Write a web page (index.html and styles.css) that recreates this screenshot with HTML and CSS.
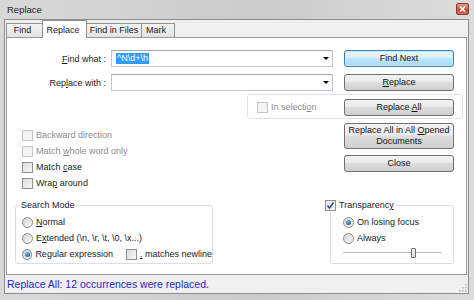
FILE: index.html
```html
<!DOCTYPE html>
<html lang="en">
<head>
    <meta charset="UTF-8">
    <title>Replace</title>
    <link rel="stylesheet" href="styles.css">
</head>
<body>

<div class="window">
    <!-- title bar -->
    <div class="titlebar">
        <span class="title">Replace</span>
        <span class="close">
            <svg width="7" height="6" viewBox="0 0 7 6"><path d="M1 0.5 L6 5.5 M6 0.5 L1 5.5" stroke="#fff" stroke-width="1.6"/></svg>
        </span>
    </div>

    <div class="client">
        <div class="tabs">
            <div class="tab t-find">Find</div>
            <div class="tab t-replace sel">Replace</div>
            <div class="tab t-files">Find in Files</div>
            <div class="tab t-mark">Mark</div>
        </div>

        <div class="panel">
            <!-- search / replace fields -->
            <div class="top">
                <div class="fields">
                    <div class="field">
                        <label><u>F</u>ind what :</label>
                        <div class="combo"><span class="hl">^N\d+\h</span><span class="arrow"></span></div>
                    </div>
                    <div class="field">
                        <label>Rep<u>l</u>ace with :</label>
                        <div class="combo"><span class="arrow"></span></div>
                    </div>
                </div>
                <div class="btncol">
                    <div class="btn default">Find Next</div>
                    <div class="btn"><u>R</u>eplace</div>
                </div>
            </div>

            <div class="insel">
                <span class="chk dis"><i class="box"></i><span>In selecti<u>o</u>n</span></span>
                <div class="btn">Replace <u>A</u>ll</div>
            </div>

            <div class="mid">
                <div class="opts">
                    <div class="chk dis"><i class="box"></i><span>Backward direction</span></div>
                    <div class="chk dis"><i class="box"></i><span>Match <u>w</u>hole word only</span></div>
                    <div class="chk"><i class="box"></i><span>Match <u>c</u>ase</span></div>
                    <div class="chk"><i class="box"></i><span>Wra<u>p</u> around</span></div>
                </div>
                <div class="btncol">
                    <div class="btn tall">Replace All in All <u>O</u>pened<br>Documents</div>
                    <div class="btn">Close</div>
                </div>
            </div>

            <div class="bottom">
                <fieldset class="group mode">
                    <legend>Search Mode</legend>
                    <div class="radio"><i class="dot"></i><span><u>N</u>ormal</span></div>
                    <div class="radio"><i class="dot"></i><span>E<u>x</u>tended (\n, \r, \t, \0, \x...)</span></div>
                    <div class="radio"><i class="dot on"></i><span>Re<u>g</u>ular expression</span>
                        <span class="chk newline"><i class="box"></i><span><u>.</u> matches newline</span></span>
                    </div>
                </fieldset>
                <fieldset class="group transp">
                    <legend>
                        <span class="chk"><i class="box checked"><svg width="9" height="9" viewBox="0 0 9 9"><path d="M1.5 4.5 L3.5 7 L7.5 1.5" fill="none" stroke="#2b4a8a" stroke-width="1.5"/></svg></i><span>Transparenc<u>y</u></span></span>
                    </legend>
                    <div class="radio"><i class="dot on"></i><span>On losing focus</span></div>
                    <div class="radio"><i class="dot"></i><span>Always</span></div>
                    <div class="slider"><span class="track"></span><span class="thumb"></span></div>
                </fieldset>
            </div>
        </div>

        <div class="status">
            <span>Replace All: 12 occurrences were replaced.</span>
            <svg class="grip" width="9" height="9" viewBox="0 0 9 9">
                <rect x="7" y="1" width="1.5" height="1.5" fill="#b5b5b5"/>
                <rect x="4" y="4" width="1.5" height="1.5" fill="#b5b5b5"/>
                <rect x="7" y="4" width="1.5" height="1.5" fill="#b5b5b5"/>
                <rect x="1" y="7" width="1.5" height="1.5" fill="#b5b5b5"/>
                <rect x="4" y="7" width="1.5" height="1.5" fill="#b5b5b5"/>
                <rect x="7" y="7" width="1.5" height="1.5" fill="#b5b5b5"/>
            </svg>
        </div>
    </div>
</div>

</body>
</html>
```

FILE: styles.css
```css
/* base */
* { box-sizing: border-box; }
body {
    margin: 0;
    background: #d4d4d4;
    font-family: "Liberation Sans", Arial, sans-serif;
    font-size: 9px;
    color: #1a1a1a;
}
u { text-decoration: underline; text-underline-offset: 1px; }

/* window frame */
.window {
    width: 474px;
    height: 300px;
    padding: 0 5px 6px 4px;
    background: linear-gradient(to right, #d8d8d8, #cbcbcb 55%, #dcdcdc);
    display: flex;
    flex-direction: column;
}
.titlebar {
    height: 19px;
    display: flex;
    align-items: center;
    padding-left: 3px;
}
.title { font-size: 9.5px; color: #1e1e1e; flex: 1; }
.close {
    width: 13px;
    height: 12px;
    margin-top: -2px;
    border: 1px solid #8c3b30;
    border-radius: 2px;
    background: linear-gradient(#e69585, #d2624f 50%, #c24530 51%, #cf6a50);
    display: flex;
    align-items: center;
    justify-content: center;
}

.client {
    flex: 1;
    border: 1px solid #8d8d8d;
    background: #f0f0f0;
    display: flex;
    flex-direction: column;
}

/* tabs */
.tabs {
    height: 17px;
    display: flex;
    align-items: flex-end;
    padding-left: 1px;
}
.tab {
    height: 14px;
    line-height: 13px;
    margin-left: -1px;
    border: 1px solid #8e9197;
    border-bottom: none;
    background: linear-gradient(#f4f4f4, #e3e3e3);
    text-align: center;
}
.tab:first-child { margin-left: 0; }
.tab.sel {
    height: 18px;
    line-height: 19px;
    margin-bottom: -1px;
    background: #fff;
    position: relative;
    z-index: 1;
}
.t-find { width: 37px; padding-right: 4px; }
.t-replace { width: 45px; padding-right: 3px; }
.t-files { width: 56px; }
.t-mark { width: 34px; padding-right: 4px; }

.panel {
    flex: 1;
    margin: 0 1px;
    background: #fff;
    border: 1px solid #9a9a9a;
    padding-top: 12px;
}

/* buttons */
.btn {
    width: 110px;
    height: 17px;
    line-height: 15px;
    border: 1px solid #707070;
    border-radius: 3px;
    background: linear-gradient(#f2f2f2, #ebebeb 45%, #dddddd 50%, #cfcfcf);
    text-align: center;
    color: #111;
}
.btn.default {
    border-color: #3c7fb1;
    background: linear-gradient(#eaf6fd, #d9f0fc 45%, #bee6fd 50%, #a7d9f5);
    box-shadow: inset 0 0 0 1px #c8eaff;
}
.btn.tall { height: 26px; line-height: 11px; padding-top: 1px; }
.btncol { display: flex; flex-direction: column; gap: 7px; }

/* find / replace fields */
.top { display: flex; }
.fields { display: flex; flex-direction: column; gap: 7px; margin-right: 11px; }
.field { display: flex; align-items: center; height: 17px; }
.field label { width: 99px; text-align: right; margin-right: 5px; }
.combo {
    width: 222px;
    height: 17px;
    border: 1px solid #c3c6cd;
    border-top-color: #a5a8b0;
    display: flex;
    align-items: center;
    padding-left: 4px;
}
.hl { background: #3399ff; color: #fff; line-height: 11px; padding: 0 1px; }
.arrow {
    margin-left: auto;
    margin-right: 3px;
    border-left: 3px solid transparent;
    border-right: 3px solid transparent;
    border-top: 3px solid #000;
}

/* in selection box */
.insel {
    margin: 3px 0 0 240px;
    width: 216px;
    height: 25px;
    border: 1px solid #dde3e8;
    border-radius: 3px;
    display: flex;
    align-items: center;
    padding: 1px 8px 0 9px;
}
.insel .btn { margin-left: auto; }

/* checkboxes and radios */
.chk, .radio { display: flex; align-items: center; white-space: nowrap; }
.box {
    width: 11px;
    height: 11px;
    margin-right: 3px;
    border: 1px solid #8f8f8f;
    background: linear-gradient(135deg, #dcdcdc, #f7f7f7);
    display: flex;
    align-items: center;
    justify-content: center;
}
.chk.dis { color: #8d8d8d; }
.chk.dis .box { border-color: #c6c6c6; background: #f4f4f4; }
.dot {
    width: 11px;
    height: 11px;
    margin-right: 3px;
    border: 1px solid #8e8e8e;
    border-radius: 50%;
    background: linear-gradient(135deg, #d4d4d4, #f6f6f6);
    display: flex;
    align-items: center;
    justify-content: center;
}
.dot.on::after {
    content: "";
    width: 5px;
    height: 5px;
    border-radius: 50%;
    background: radial-gradient(circle at 40% 35%, #7cc0f0, #1f5fa0 70%);
}

.mid { display: flex; align-items: flex-start; }
.opts { margin: 8px 0 0 15px; }
.opts .chk { height: 16px; }
.mid .btncol { margin: 4px 12px 0 auto; gap: 6px; }

/* group boxes */
.bottom { display: flex; margin-top: 8px; padding-left: 8px; }
.group {
    margin: 0;
    min-width: 0;
    border: 1px solid #d8e0e6;
    border-radius: 3px;
}
.group legend { line-height: 12px; padding: 0 1px; }
.group .radio { height: 16px; }
.mode { width: 198px; height: 65px; padding: 3px 0 0 6px; }
.mode legend { margin-left: -2px; }
.newline { margin-left: 13px; }
.transp { width: 124px; height: 65px; margin-left: 117px; padding: 3px 0 0 12px; }
.transp legend { margin-left: -19px; }
.box.checked { background: linear-gradient(135deg, #e4e4e4, #fafafa); }

.slider { position: relative; width: 99px; height: 14px; }
.track {
    position: absolute;
    left: 0;
    right: 0;
    top: 6px;
    height: 2px;
    border-top: 1px solid #b9b9b9;
    border-bottom: 1px solid #fff;
}
.thumb {
    position: absolute;
    left: 68px;
    top: 2px;
    width: 5px;
    height: 10px;
    border: 1px solid #6f6f6f;
    border-radius: 1px;
    background: linear-gradient(#f6f6f6, #d8d8d8);
}

/* status line */
.status {
    height: 18px;
    display: flex;
    align-items: center;
    padding: 0 1px 0 2px;
    font-size: 10.5px;
    color: #2626c4;
}
.grip { margin-left: auto; margin-top: 6px; }
```
